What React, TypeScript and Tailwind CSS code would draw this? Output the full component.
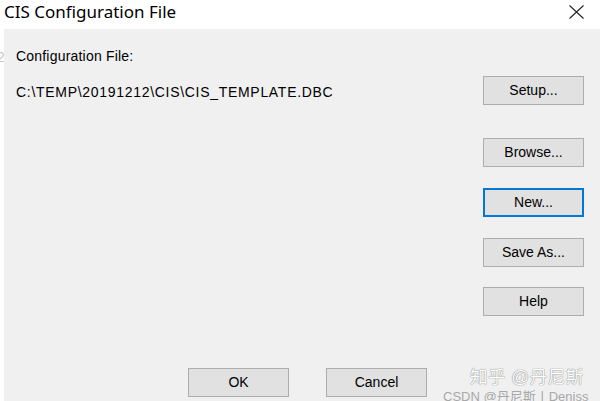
import type { ReactNode } from "react";

function Btn({ children, focused = false }: { children: ReactNode; focused?: boolean }) {
  return (
    <button
      className={
        focused
          ? "w-[101px] h-[29px] bg-[#e1e1e1] border-2 border-[#0078d7] text-[14px] text-black"
          : "w-[101px] h-[29px] bg-[#e1e1e1] border border-[#adadad] text-[14px] text-black"
      }
    >
      {children}
    </button>
  );
}

export default function App() {
  return (
    <div className="w-[600px] h-[401px] flex flex-col bg-white overflow-hidden relative font-['Liberation_Sans','Noto_Sans_CJK_SC',sans-serif]">
      <div className="h-[29px] shrink-0 flex items-center justify-between pl-[4px] pr-[16px]">
        <span className="text-[17px] text-black font-['Noto_Sans',sans-serif] leading-none -mt-[6px]">
          CIS Configuration File
        </span>
        <svg width="15" height="14" viewBox="0 0 15 14" className="-mt-[6px]">
          <path d="M0.5 0.5 L14.5 13.5 M14.5 0.5 L0.5 13.5" stroke="#222" strokeWidth="1.1" fill="none" />
        </svg>
      </div>

      <div className="flex-1 flex">
        <div className="w-[4px] bg-white overflow-hidden relative">
          <span className="absolute top-[18px] -left-[3px] text-[14px] text-[#c8c8c8]">2</span>
        </div>
        <div className="flex-1 bg-[#f0f0f0] flex flex-col">
          <div className="flex">
            <div className="flex-1 pl-[12px] pt-[19px] flex flex-col gap-[20px] text-[14px] leading-[16px] text-black">
              <span className="tracking-[0.2px]">Configuration File:</span>
              <span className="tracking-[0.7px]">C:\TEMP\20191212\CIS\CIS_TEMPLATE.DBC</span>
            </div>
            <div className="w-[101px] mr-[16px] mt-[47px] flex flex-col">
              <Btn>Setup...</Btn>
              <div className="mt-[33px] flex flex-col gap-[21px]">
                <Btn>Browse...</Btn>
                <Btn focused>New...</Btn>
                <Btn>Save As...</Btn>
              </div>
              <div className="mt-[20px]">
                <Btn>Help</Btn>
              </div>
            </div>
          </div>
          <div className="flex-1" />
          <div className="flex pl-[184px] gap-[37px] pb-[4px]">
            <Btn>OK</Btn>
            <Btn>Cancel</Btn>
          </div>
        </div>
      </div>

      <span className="absolute left-[470px] top-[364px] text-[17.5px] tracking-[0.5px] text-white [text-shadow:0_0_1px_#888,0_0_1px_#888]">
        知乎 @丹尼斯
      </span>
      <span className="absolute left-[443px] top-[387px] text-[13px] text-[#a8a8a8] whitespace-nowrap">
        CSDN @丹尼斯丨Deniss
      </span>
    </div>
  );
}
